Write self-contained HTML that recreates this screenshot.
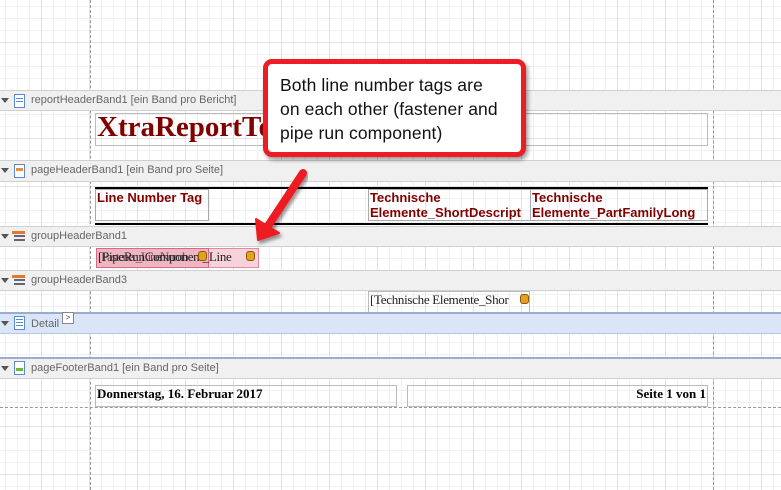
<!DOCTYPE html>
<html><head><meta charset="utf-8"><style>
body{margin:0;width:781px;height:490px;overflow:hidden;position:relative;font-family:"Liberation Sans",sans-serif;
background-color:#fff;
background-image:linear-gradient(90deg,#e2e2e2 1px,transparent 1px),linear-gradient(#e2e2e2 1px,transparent 1px),linear-gradient(90deg,#f0f0f0 1px,transparent 1px),linear-gradient(#f0f0f0 1px,transparent 1px);
background-size:48px 48px,48px 48px,12px 12px,12px 12px;background-position:41px 42px,41px 42px,5px 6px,5px 6px;}
.a{position:absolute}
.bh{position:absolute;left:0;width:781px;background:#f0f0f0;border-top:1px solid #d0d0d0;border-bottom:1px solid #d0d0d0;font-size:11px;color:#666;box-sizing:border-box}
.bh span{position:absolute;left:31px;top:3px}
.tri{position:absolute;left:1px;top:7px;width:0;height:0;border-left:4px solid transparent;border-right:4px solid transparent;border-top:5px solid #555}
.ic{position:absolute;left:14px;top:3px;width:9px;height:12px;border:1px solid #5b8bd0;background:#fff}
.ic i{position:absolute;left:1px;right:1px;height:3px;background:#e8903a}
.vd{position:absolute;top:0;height:490px;border-left:1px dashed #999}
.box{position:absolute;border:1px solid #bbb;box-sizing:border-box}
.hd{font-weight:bold;font-size:13px;color:#800000;line-height:15px}
.sv{font-family:"Liberation Serif",serif}
</style></head><body>
<div class="vd" style="left:90px"></div>
<div class="vd" style="left:713px"></div>

<div class="bh" style="top:90px;height:21px"><div class="tri"></div><div class="ic"><i style="top:3px;background:#5b8bd0;height:1px"></i><i style="top:6px;background:#5b8bd0;height:1px"></i></div><span>reportHeaderBand1 [ein Band pro Bericht]</span></div>
<div class="box" style="left:95px;top:113px;width:613px;height:33px"></div>
<div class="a sv" style="left:97px;top:111px;font-size:29px;font-weight:bold;color:#800000">XtraReportTe</div>

<div class="bh" style="top:160px;height:22px"><div class="tri"></div><div class="ic"><i style="top:3px"></i></div><span>pageHeaderBand1 [ein Band pro Seite]</span></div>
<div class="a" style="left:95px;top:187px;width:613px;height:34px;border-top:2px solid #000;border-bottom:2px solid #000"></div>
<div class="box" style="left:95px;top:189px;width:114px;height:32px;border-color:#aaa"></div>
<div class="box" style="left:368px;top:189px;width:163px;height:32px;border-color:#aaa"></div>
<div class="box" style="left:530px;top:189px;width:178px;height:32px;border-color:#aaa"></div>
<div class="a hd" style="left:97px;top:190px">Line Number Tag</div>
<div class="a hd" style="left:370px;top:190px">Technische<br>Elemente_ShortDescript</div>
<div class="a hd" style="left:532px;top:190px">Technische<br>Elemente_PartFamilyLong</div>

<div class="bh" style="top:226px;height:21px"><div class="tri"></div><div class="a" style="left:12px;top:4px;width:13px;height:3px;background:#e07a2e"></div><div class="a" style="left:14px;top:8px;width:11px;height:2px;background:#667"></div><div class="a" style="left:14px;top:12px;width:11px;height:2px;background:#667"></div><span>groupHeaderBand1</span></div>
<div class="a" style="left:96px;top:248px;width:163px;height:20px;background:#f6d3da;border:1px solid #e48a9c;box-sizing:border-box"></div>
<div class="a" style="left:96px;top:248px;width:113px;height:20px;background:#efb5c2;border:1px solid #d86a82;box-sizing:border-box"></div>
<div class="a sv" style="left:98px;top:249px;font-size:13px;color:#222;letter-spacing:-0.3px">[PipeRunComponent_Line</div>
<div class="a sv" style="left:98px;top:249px;font-size:13px;color:#222;letter-spacing:-1.2px;opacity:.7">[Fastener_LineNumb</div>
<div class="a" style="left:198px;top:251px;width:7px;height:8px;background:#e6a020;border-radius:3px;border:1px solid #8a5a00"></div>
<div class="a" style="left:246px;top:251px;width:7px;height:8px;background:#e6a020;border-radius:3px;border:1px solid #8a5a00"></div>

<div class="bh" style="top:270px;height:21px"><div class="tri"></div><div class="a" style="left:12px;top:4px;width:13px;height:3px;background:#e07a2e"></div><div class="a" style="left:14px;top:8px;width:11px;height:2px;background:#667"></div><div class="a" style="left:14px;top:12px;width:11px;height:2px;background:#667"></div><span>groupHeaderBand3</span></div>
<div class="box" style="left:368px;top:291px;width:162px;height:22px"></div>
<div class="a sv" style="left:370px;top:292px;font-size:13px;color:#222;letter-spacing:-0.3px">[Technische Elemente_Shor</div>
<div class="a" style="left:520px;top:294px;width:7px;height:8px;background:#e6a020;border-radius:3px;border:1px solid #8a5a00"></div>

<div class="bh" style="top:312px;height:22px;background:#dae6f8;border-top:2px solid #9aaecb;border-bottom:1px solid #b8c8e0"><div class="tri"></div><div class="ic" style="top:2px"><i style="top:2px;background:#5b8bd0;height:1px"></i><i style="top:5px;background:#5b8bd0;height:1px"></i><i style="top:8px;background:#5b8bd0;height:1px"></i></div><span style="top:4px">Detail</span></div>
<div class="a" style="left:62px;top:312px;width:10px;height:10px;background:#fff;border:1px solid #888;font-size:8px;line-height:10px;text-align:center;color:#555">&gt;</div>

<div class="bh" style="top:357px;height:22px;border-top:2px solid #9aaecb"><div class="tri"></div><div class="ic" style="top:2px"><i style="top:6px;background:#6cba3a"></i></div><span>pageFooterBand1 [ein Band pro Seite]</span></div>
<div class="box" style="left:95px;top:385px;width:302px;height:22px"></div>
<div class="box" style="left:407px;top:385px;width:301px;height:22px"></div>
<div class="a sv" style="left:97px;top:386px;font-size:13px;font-weight:bold">Donnerstag, 16. Februar 2017</div>
<div class="a sv" style="left:560px;width:146px;text-align:right;top:386px;font-size:13px;font-weight:bold">Seite 1 von 1</div>
<div class="a" style="left:0;top:407px;width:781px;border-top:1px dashed #999"></div>

<div class="a" style="left:263px;top:59px;width:263px;height:98px;box-sizing:border-box;border:5px solid #ee1c24;border-radius:9px;background:#fff;box-shadow:2px 3px 4px rgba(0,0,0,.4)"></div>
<div class="a" style="left:280px;top:73px;font-size:17.5px;line-height:24px;color:#111;letter-spacing:0.1px">Both line number tags are<br>on each other (fastener and<br>pipe run component)</div>
<svg class="a" style="left:0;top:0" width="781" height="490"><defs><filter id="s"><feDropShadow dx="2" dy="3" stdDeviation="1.5" flood-opacity=".4"/></filter></defs>
<g filter="url(#s)"><line x1="303" y1="173" x2="268" y2="226" stroke="#ee1c24" stroke-width="8" stroke-linecap="round"/>
<polygon points="258,240 256,219 279,233" fill="#ee1c24" stroke="#ee1c24" stroke-width="2" stroke-linejoin="round"/></g></svg>
</body></html>
